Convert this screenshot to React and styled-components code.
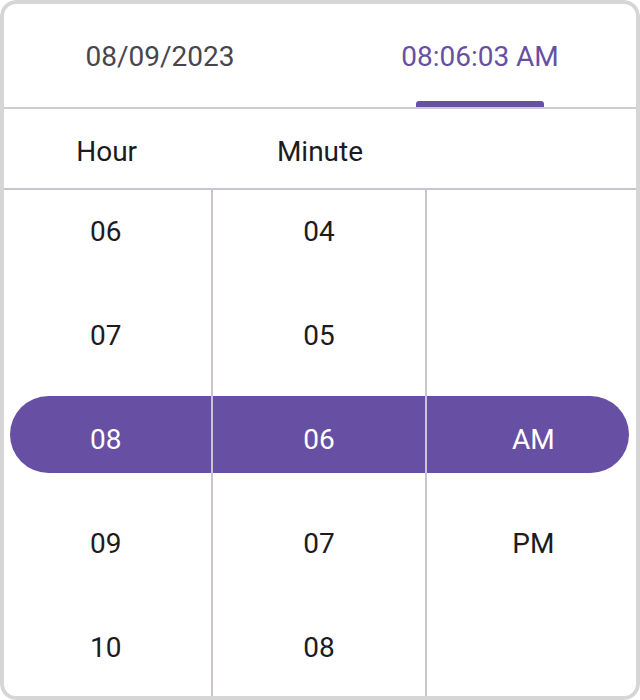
import React from 'react'
import { styled, createGlobalStyle } from 'styled-components'

const GlobalStyle = createGlobalStyle`
  html, body {
    margin: 0;
    padding: 0;
    background: #ffffff;
  }
  body {
    font-family: Roboto, "Noto Sans", "Liberation Sans", sans-serif;
  }
`;

const Card = styled.div`
  position: relative;
  width: 640px;
  height: 700px;
  background: #ffffff;
  border-radius: 16px;
  overflow: hidden;
  display: flex;
  flex-direction: column;

  /* frame drawn over the content */
  &::after {
    content: '';
    position: absolute;
    inset: 0;
    border: 4px solid #d6d6d6;
    border-radius: 16px;
    pointer-events: none;
    z-index: 5;
  }
`;

const TabBar = styled.div`
  display: grid;
  grid-template-columns: 1fr 1fr;
  height: 107px;
  border-bottom: 2px solid #cfcbd3;
`;

const Tab = styled.div`
  position: relative;
  display: flex;
  align-items: center;
  justify-content: center;
  padding-top: 6px;
  font-size: 28px;
  color: ${p => (p.$active ? '#6750a4' : '#49454f')};
`;

const Indicator = styled.div`
  position: absolute;
  bottom: 0;
  left: 50%;
  width: 128px;
  height: 6px;
  margin-left: -64px;
  background: #6750a4;
  border-radius: 3px 3px 0 0;
`;

const HeaderRow = styled.div`
  display: grid;
  grid-template-columns: repeat(3, 1fr);
  height: 79px;
  border-bottom: 2px solid #cac4d0;
`;

const HeaderCell = styled.div`
  display: flex;
  align-items: center;
  justify-content: center;
  padding-top: 6px;
  font-size: 28px;
  color: #1d1b20;
`;

const Body = styled.div`
  position: relative;
  flex: 1;
  display: grid;
  grid-template-columns: repeat(3, 1fr);
  min-height: 0;
`;

const Highlight = styled.div`
  position: absolute;
  top: 206px;
  left: 10px;
  right: 11px;
  height: 77px;
  border-radius: 39px;
  background: #6750a4;
  z-index: 0;
`;

const Column = styled.div`
  position: relative;
  z-index: 1;
  overflow: hidden;
  border-right: ${p => (p.$last ? 'none' : '2px solid #cac4d0')};
`;

const Wheel = styled.div`
  display: flex;
  flex-direction: column;
  margin-top: -11px;
`;

const Item = styled.div`
  height: 104px;
  flex: 0 0 104px;
  display: flex;
  align-items: center;
  justify-content: center;
  font-size: 28px;
  color: ${p => (p.$selected ? '#ffffff' : '#1d1b20')};
`;

const columns = [
  { key: 'hour', items: ['06', '07', '08', '09', '10'] },
  { key: 'minute', items: ['04', '05', '06', '07', '08'] },
  { key: 'period', items: ['', '', 'AM', 'PM', ''] },
];

const App = () => {
  return (
    <>
      <GlobalStyle />
      <Card>
        <TabBar>
          <Tab>08/09/2023</Tab>
          <Tab $active>
            08:06:03 AM
            <Indicator />
          </Tab>
        </TabBar>
        <HeaderRow>
          <HeaderCell>Hour</HeaderCell>
          <HeaderCell>Minute</HeaderCell>
          <HeaderCell />
        </HeaderRow>
        <Body>
          <Highlight />
          {columns.map((col, ci) => (
            <Column key={col.key} $last={ci === columns.length - 1}>
              <Wheel>
                {col.items.map((label, i) => (
                  <Item key={i} $selected={i === 2}>
                    {label}
                  </Item>
                ))}
              </Wheel>
            </Column>
          ))}
        </Body>
      </Card>
    </>
  );
};

export default App;
